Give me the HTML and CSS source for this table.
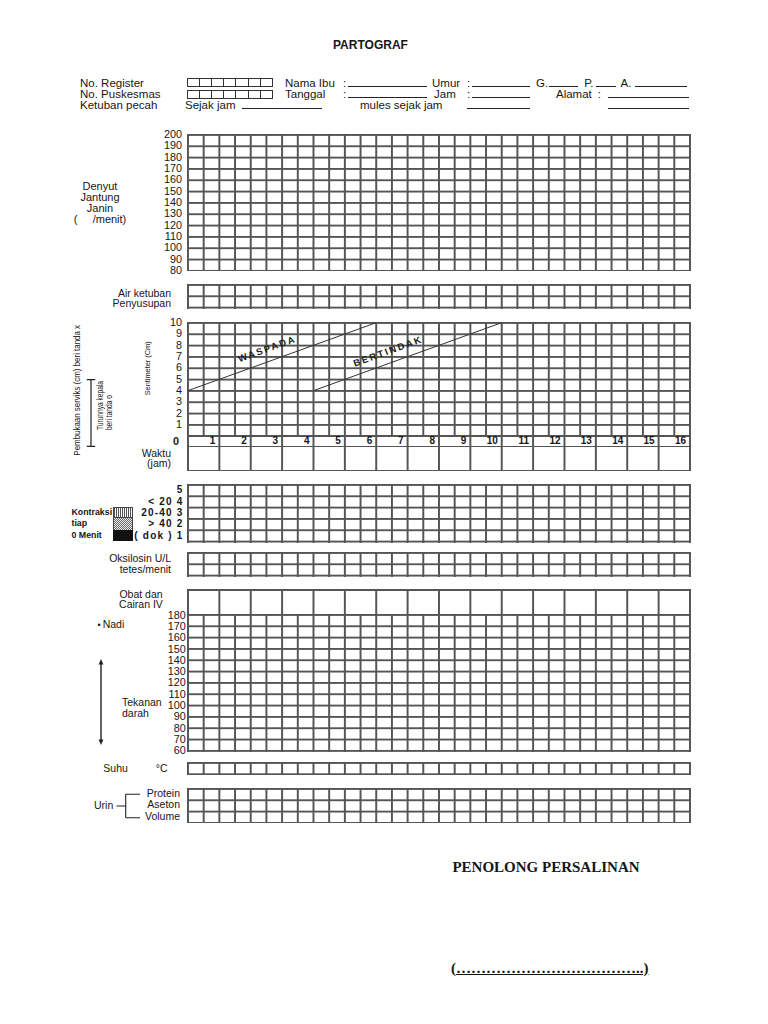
FILE: index.html
```html
<!DOCTYPE html>
<html lang="id">
<head>
<meta charset="utf-8">
<title>Partograf</title>
<link rel="stylesheet" href="styles.css">
</head>
<body>
<div class="page">
  <h1 class="title">PARTOGRAF</h1>

  <div class="hdr">
    <div>No. Register</div>
    <div><div class="boxes"><i class="box"></i><i class="box"></i><i class="box"></i><i class="box"></i><i class="box"></i><i class="box"></i><i class="box"></i></div></div>
    <div>Nama Ibu</div>
    <div>:<span class="ul nama"></span></div>
    <div>Umur</div>
    <div>:<span class="ul umur"></span></div>
    <div>G.<span class="ul ug"></span><span class="pl">P.</span><span class="ul up"></span><span class="al">A.</span><span class="ul ua"></span></div>

    <div>No. Puskesmas</div>
    <div><div class="boxes"><i class="box"></i><i class="box"></i><i class="box"></i><i class="box"></i><i class="box"></i><i class="box"></i><i class="box"></i></div></div>
    <div>Tanggal</div>
    <div>:<span class="ul nama"></span></div>
    <div class="jam">Jam</div>
    <div>:<span class="ul umur"></span></div>
    <div><span class="alamat">Alamat</span><span class="colon">:</span><span class="ul alm"></span></div>

    <div>Ketuban pecah</div>
    <div class="span3"><span class="sejak">Sejak jam</span><span class="ul sj"></span><span class="mules">mules sejak jam</span></div>
    <div><span class="ul ms"></span></div>
    <div><span class="ul alm2"></span></div>
  </div>

  <!-- Denyut jantung janin -->
  <div class="sec fhr">
    <div class="lab">
      <div class="desc-fhr">Denyut<br>Jantung<br>Janin<br><span class="pre">(     /menit)</span></div>
      <div class="axis">
        <div class="ticks"><span>200</span><span>190</span><span>180</span><span>170</span><span>160</span><span>150</span><span>140</span><span>130</span><span>120</span><span>110</span><span>100</span><span>90</span><span>80</span></div>
      </div>
    </div>
    <div class="g r12"></div>
  </div>

  <!-- Air ketuban -->
  <div class="sec air">
    <div class="lab right-lab"><div class="rtext">Air ketuban<br>Penyusupan</div></div>
    <div class="g r2"></div>
  </div>

  <!-- Serviks -->
  <div class="sec cervix">
    <div class="lab col-lab">
      <div class="cx-top">
        <div class="vt pemb">Pembukaan serviks (cm) beri tanda x</div>
        <svg class="brk" width="10" height="68" viewBox="0 0 10 68"><path d="M5 0.6V67.4M0.8 0.6H9.2M0.8 67.4H9.2" stroke="#222" stroke-width="1.2" fill="none"/></svg>
        <div class="vt turun">Turunnya kepala<br>beri tanda o</div>
        <div class="vt senti">Sentimeter (Cm)</div>
        <div class="axis">
          <div class="ticks"><span>10</span><span>9</span><span>8</span><span>7</span><span>6</span><span>5</span><span>4</span><span>3</span><span>2</span><span>1</span></div>
          <div class="zero">0</div>
        </div>
      </div>
      <div class="wk">Waktu<br>(jam)</div>
    </div>
    <div class="cx">
      <div class="g r10"></div>
      <div class="gh hrs"><span>1</span><span>2</span><span>3</span><span>4</span><span>5</span><span>6</span><span>7</span><span>8</span><span>9</span><span>10</span><span>11</span><span>12</span><span>13</span><span>14</span><span>15</span><span>16</span></div>
      <div class="gh closed waktu"></div>
      <svg class="alert" width="504" height="114" viewBox="0 0 504 114">
        <line x1="0.75" y1="68.73" x2="189" y2="0.75" stroke="#333" stroke-width="1"/>
        <line x1="126.25" y1="68.73" x2="314.5" y2="0.75" stroke="#333" stroke-width="1"/>
        <text class="atext" transform="translate(80 26.5) rotate(-19.85)" text-anchor="middle" dominant-baseline="central">WASPADA</text>
        <text class="atext" transform="translate(201 29) rotate(-19.85)" text-anchor="middle" dominant-baseline="central">BERTINDAK</text>
      </svg>
    </div>
  </div>

  <!-- Kontraksi -->
  <div class="sec kontr">
    <div class="lab kon-lab">
      <div class="kdesc">Kontraksi<br>tiap<br>0 Menit</div>
      <div class="legend"><i class="lg1"></i><i class="lg2"></i><i class="lg3"></i></div>
      <div class="klabels"><span>5</span><span>&lt; 20 4</span><span>20-40 3</span><span>&gt; 40 2</span><span>( dok ) 1</span></div>
    </div>
    <div class="g r5"></div>
  </div>

  <!-- Oksitosin -->
  <div class="sec oks">
    <div class="lab right-lab"><div class="rtext oks-t">Oksilosin U/L<br>tetes/menit</div></div>
    <div class="g r2"></div>
  </div>

  <!-- Obat -->
  <div class="sec obat">
    <div class="lab obat-lab"><div class="obat-t">Obat dan<br>Cairan IV</div></div>
    <div class="gh obat-g"></div>
  </div>

  <!-- Nadi & tekanan darah -->
  <div class="sec nadi">
    <div class="lab">
      <div class="ndesc">
        <div class="nadi-t"><span class="dot">•</span>Nadi</div>
        <div class="bp">
          <svg class="arrow" width="6" height="86" viewBox="0 0 6 86"><path d="M3 4V82" stroke="#222" stroke-width="1.4"/><path d="M3 0L0.6 5.5H5.4Z M3 86L0.6 80.5H5.4Z" fill="#222"/></svg>
          <div class="tek">Tekanan<br>darah</div>
        </div>
      </div>
      <div class="axis">
        <div class="ticks"><span>180</span><span>170</span><span>160</span><span>150</span><span>140</span><span>130</span><span>120</span><span>110</span><span>100</span><span>90</span><span>80</span><span>70</span><span>60</span></div>
      </div>
    </div>
    <div class="g r12"></div>
  </div>

  <!-- Suhu -->
  <div class="sec suhu">
    <div class="lab suhu-lab"><span class="suhu-t">Suhu</span><span class="deg">°C</span></div>
    <div class="g r1"></div>
  </div>

  <!-- Urin -->
  <div class="sec urin">
    <div class="lab urin-lab">
      <div class="urin-t">Urin</div>
      <svg class="ubrk" width="26" height="36" viewBox="0 0 26 36"><path d="M0.5 18H9.7M9.7 6.3V29.7M9.7 6.3H24M9.7 29.7H24" stroke="#222" stroke-width="1.1" fill="none"/></svg>
      <div class="ulabels"><span>Protein</span><span>Aseton</span><span>Volume</span></div>
    </div>
    <div class="g r3"></div>
  </div>

  <div class="foot">
    <div class="pen">PENOLONG PERSALINAN</div>
    <div class="sign">(………………………………..)</div>
  </div>
</div>
</body>
</html>
```

FILE: styles.css
```css
:root {
  --cw: 15.6875px;
  --rh: 11.33px;
  --lw: 1.5px;
  --lc: #555;
}

* { box-sizing: border-box; }

body {
  margin: 0;
  background: #fff;
  color: #161616;
  font-family: "Liberation Sans", Arial, sans-serif;
}

.page {
  width: 768px;
  height: 1024px;
  overflow: hidden;
}

.title {
  margin: 0;
  padding: 38px 0 0 333px;
  font-size: 12px;
  line-height: 14px;
  font-weight: bold;
}

/* ---------- header ---------- */
.hdr {
  display: grid;
  grid-template-columns: 106px 99px 58px 89px 35px 69px 153px;
  margin: 25.6px 0 0 80px;
  font-size: 11.5px;
  line-height: 11.4px;
  white-space: nowrap;
}
.boxes {
  display: flex;
  width: fit-content;
  height: 9px;
  margin: 0.8px 0 0 0.7px;
  border-left: 1px solid #333;
}
.box {
  width: 12.2px;
  border: 1px solid #333;
  border-left: 0;
}
.ul {
  display: inline-block;
  height: 8px;
  border-bottom: 1px solid #222;
}
.ul.nama { width: 79px; margin-left: 2px; }
.ul.umur { width: 58px; margin-left: 2px; }
.ul.ug { width: 29px; margin-left: 1px; }
.ul.up { width: 20px; margin-left: 2px; }
.ul.ua { width: 52px; margin-left: 4px; }
.pl { margin-left: 6px; }
.al { margin-left: 5px; }
.jam { padding-left: 2px; }
.alamat { margin-left: 20px; }
.colon { margin-left: 6px; }
.ul.alm { width: 81px; margin-left: 7px; }
.span3 { grid-column: 2 / 6; }
.sejak { margin-left: -1px; }
.ul.sj { width: 80px; margin-left: 6.5px; }
.mules { margin-left: 38px; }
.ul.ms { width: 63px; }
.ul.alm2 { width: 81px; margin-left: 72px; }

/* ---------- sections ---------- */
.sec {
  display: flex;
  align-items: stretch;
}
.lab {
  width: 187px;
  flex: none;
  display: flex;
  contain: size;
  font-size: 10.5px;
  line-height: 11px;
  white-space: nowrap;
}
.axis {
  flex: none;
  width: 29px;
  margin-left: auto;
  padding-right: 5px;
  text-align: right;
  font-size: 10.8px;
}
.ticks { margin-top: calc(0.75px - var(--rh) / 2); }
.ticks span {
  display: block;
  height: var(--rh);
  line-height: var(--rh);
}

.g {
  flex: none;
  width: calc(32 * var(--cw) + var(--lw));
  background-image:
    linear-gradient(90deg, var(--lc) var(--lw), transparent var(--lw)),
    linear-gradient(180deg, var(--lc) var(--lw), transparent var(--lw));
  background-size: var(--cw) 100%, 100% var(--rh);
}
.r1 { height: calc(var(--rh) + var(--lw)); }
.r2 { height: calc(2 * var(--rh) + var(--lw)); }
.r3 { height: calc(3 * var(--rh) + var(--lw)); }
.r5 { height: calc(5 * var(--rh) + var(--lw)); }
.r10 { height: calc(10 * var(--rh)); }
.r12 { height: calc(12 * var(--rh) + var(--lw)); }

.gh {
  flex: none;
  width: calc(32 * var(--cw) + var(--lw));
  background-image:
    linear-gradient(90deg, var(--lc) var(--lw), transparent var(--lw)),
    linear-gradient(180deg, var(--lc) var(--lw), transparent var(--lw));
  background-size: calc(2 * var(--cw)) 100%, 100% 100%;
  background-repeat: repeat-x, no-repeat;
}
.gh.closed {
  background-image:
    linear-gradient(90deg, var(--lc) var(--lw), transparent var(--lw)),
    linear-gradient(180deg, var(--lc) var(--lw), transparent var(--lw)),
    linear-gradient(0deg, var(--lc) var(--lw), transparent var(--lw));
  background-size: calc(2 * var(--cw)) 100%, 100% 100%, 100% 100%;
  background-repeat: repeat-x, no-repeat, no-repeat;
}

/* FHR */
.fhr { margin-top: 22.2px; }
.desc-fhr {
  flex: 1;
  align-self: center;
  padding-left: 42px;
  text-align: center;
  font-size: 11px;
  line-height: 11.1px;
}
.pre { white-space: pre; }

/* right aligned labels */
.right-lab { justify-content: flex-end; padding-right: 16px; }
.rtext { text-align: right; line-height: 10px; padding-top: 3.8px; }
.air { margin-top: 13.04px; }

/* cervix */
.cervix { margin-top: 13.34px; }
.col-lab { flex-direction: column; }
.cx-top {
  display: flex;
  align-items: flex-start;
  height: calc(10 * var(--rh) + 11px);
}
.vt {
  flex: none;
  writing-mode: vertical-rl;
  white-space: nowrap;
}
.pemb {
  margin-left: 72px;
  margin-top: -6px;
  font-size: 9px;
  line-height: 11px;
  transform: rotate(180deg) scaleY(0.88);
}
.brk { flex: none; margin-left: 3px; margin-top: 57.5px; }
.turun {
  margin-top: 52px;
  font-size: 8.5px;
  line-height: 9px;
  transform: rotate(180deg) scaleY(0.78);
}
.senti {
  margin-left: 29px;
  margin-top: 17px;
  font-size: 8px;
  line-height: 9px;
  transform: rotate(180deg) scaleY(0.92);
}
.zero {
  margin-top: 5.6px;
  height: 11px;
  line-height: 11px;
  padding-right: 3px;
  font-weight: bold;
}
.wk {
  height: 24.5px;
  padding: 1.5px 16px 0 0;
  text-align: right;
  line-height: 10px;
}
.cx {
  flex: none;
  position: relative;
  display: flex;
  flex-direction: column;
}
.hrs {
  display: flex;
  height: 11px;
}
.hrs span {
  flex: none;
  width: calc(2 * var(--cw));
  padding-right: 3px;
  text-align: right;
  font-size: 10px;
  font-weight: bold;
  line-height: 11.5px;
}
.waktu { height: 24.5px; }
.alert {
  position: absolute;
  left: 0;
  top: 0;
  overflow: visible;
  pointer-events: none;
}
.atext {
  font-family: "Liberation Sans", Arial, sans-serif;
  font-size: 9.5px;
  font-weight: bold;
  letter-spacing: 1.9px;
  fill: #1a1a1a;
}

/* contractions */
.kontr { margin-top: 13.7px; }
.kon-lab { align-items: flex-end; padding-bottom: 1.5px; }
.kdesc {
  flex: none;
  width: 41.8px;
  margin-left: 71.5px;
  font-size: 8.8px;
  font-weight: bold;
  line-height: 11.5px;
}
.legend {
  flex: none;
  width: 19.4px;
  display: flex;
  flex-direction: column;
}
.legend i { display: block; height: 11.5px; }
.lg1 {
  border: 1px solid #444;
  background: repeating-linear-gradient(90deg, #555 0 1px, #fff 1px 2px);
}
.lg2 {
  border-left: 1px solid #444;
  border-right: 1px solid #444;
  background: repeating-conic-gradient(#666 0 25%, #eee 0 50%) 0 0 / 2px 2px;
}
.lg3 { background: #111; }
.klabels {
  flex: 1;
  display: flex;
  flex-direction: column;
  align-items: flex-end;
  padding-right: 3.5px;
  font-size: 10px;
  font-weight: bold;
  letter-spacing: 1.2px;
}
.klabels span {
  display: block;
  height: var(--rh);
  line-height: var(--rh);
}

/* oksitosin */
.oks { margin-top: 9.85px; }
.oks-t { line-height: 11px; padding-top: 0.3px; }

/* obat */
.obat { margin-top: 12.84px; }
.obat-lab { justify-content: flex-end; padding-right: 23px; }
.obat-t { width: 46px; text-align: center; line-height: 10px; }
.obat-g { height: 25px; }

/* nadi */
.ndesc {
  flex: 1;
  padding-left: 97.5px;
}
.nadi-t { margin-top: 5px; line-height: 11px; }
.dot { margin-right: 2px; font-size: 9px; }
.bp {
  display: flex;
  align-items: flex-start;
  margin-top: 27.5px;
}
.arrow { flex: none; }
.tek {
  margin-left: 18.5px;
  margin-top: 38.2px;
  line-height: 11px;
}

/* suhu */
.suhu { margin-top: 10.04px; }
.suhu-lab { align-items: center; }
.suhu-t { margin-left: 103.3px; }
.deg { margin-left: 28px; }

/* urin */
.urin { margin-top: 13.17px; }
.urin-lab { align-items: flex-start; }
.urin-t { margin-left: 94px; margin-top: 12.5px; }
.ubrk { flex: none; margin-left: 3px; }
.ulabels {
  flex: 1;
  display: flex;
  flex-direction: column;
  align-items: flex-end;
  padding-right: 7px;
}
.ulabels span {
  display: block;
  height: var(--rh);
  line-height: var(--rh);
}

/* footer */
.foot {
  margin: 35.7px 0 0 451px;
  width: 190px;
  text-align: center;
  font-family: "Liberation Serif", "Times New Roman", serif;
  font-weight: bold;
  font-size: 15px;
  line-height: 17px;
  white-space: nowrap;
}
.sign {
  margin-top: 83.6px;
  text-decoration: underline;
  text-underline-offset: 1px;
}
```
